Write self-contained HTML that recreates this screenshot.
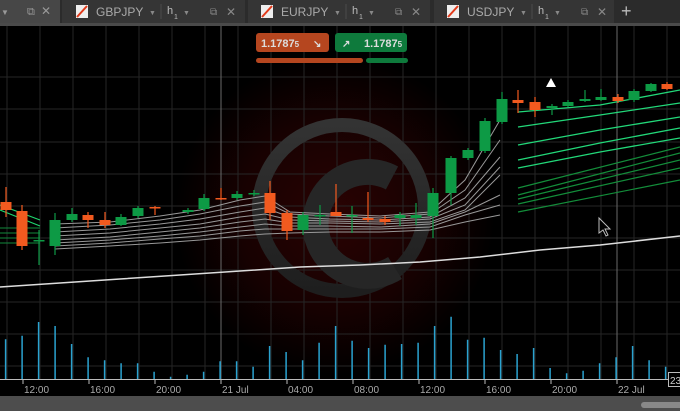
<!DOCTYPE html>
<html><head><meta charset="utf-8"><style>
html,body{margin:0;padding:0;background:#000;width:680px;height:411px;overflow:hidden;font-family:"Liberation Sans",sans-serif}
</style></head><body>
<svg width="680" height="411" viewBox="0 0 680 411" xmlns="http://www.w3.org/2000/svg" font-family="Liberation Sans, sans-serif">
<defs>
<radialGradient id="glow" cx="335" cy="215" r="160" gradientUnits="userSpaceOnUse">
<stop offset="0" stop-color="#2a0303"/><stop offset="0.6" stop-color="#170101"/><stop offset="1" stop-color="#000"/>
</radialGradient>
<linearGradient id="ring" x1="0" y1="0" x2="0" y2="1">
<stop offset="0" stop-color="#333"/><stop offset="1" stop-color="#1e1e1e"/>
</linearGradient>
</defs>
<rect width="680" height="411" fill="#000"/>
<circle cx="335" cy="215" r="160" fill="url(#glow)"/>
<g stroke="#262626" stroke-width="1">
<path d="M0 77H680M0 109H680M0 142H680M0 174H680M0 206H680M0 238H680M0 270H680M0 302H680M0 334H680M0 366H680"/>
<path d="M7 25V380M40 25V380M73 25V380M106 25V380M139 25V380M172 25V380M205 25V380M238 25V380M271 25V380M304 25V380M337 25V380M370 25V380M403 25V380M436 25V380M469 25V380M502 25V380M535 25V380M568 25V380M601 25V380M634 25V380M667 25V380"/>
</g>
<path d="M221 25V380M617 25V380" stroke="#6a6a6a" stroke-width="1"/>
<circle cx="342" cy="208" r="83" fill="none" stroke="url(#ring)" stroke-width="14"/>
<path d="M392 178 A52 52 0 1 0 395 268" fill="none" stroke="#262626" stroke-width="26"/>
<path stroke="#2aa3d0" stroke-width="1.5" d="M5.6 379V339.3M22.1 379V335.7M38.6 379V322M55.1 379V326M71.6 379V344M88.1 379V357.3M104.6 379V360.3M121.1 379V363.3M137.6 379V363.3M154.1 379V371.7M170.6 379V376.7M187.1 379V374.7M203.6 379V371.7M220.1 379V361.3M236.6 379V361.3M253.1 379V366.7M269.6 379V346M286.1 379V352M302.6 379V360.3M319.1 379V342.7M335.6 379V326M352.1 379V340.7M368.6 379V348M385.1 379V344.7M401.6 379V344M418.1 379V342.7M434.6 379V326M451.1 379V316.7M467.6 379V339.7M484.1 379V337.7M500.6 379V350M517.1 379V354M533.6 379V348M550.1 379V368M566.6 379V373.3M583.1 379V370.7M599.6 379V363.3M616.1 379V357.3M632.6 379V346M649.1 379V360.3M665.6 379V366.7"/>
<path d="M0 379.5H668" stroke="#bbb" stroke-width="1"/>
<polyline points="0,287 60,283 120,279 180,275 240,271 300,267 360,265 420,262 480,257 540,250 600,245 680,236" fill="none" stroke="#ddd" stroke-width="1.5"/>
<g fill="none" stroke="#999" stroke-width="1">
<polyline points="55,224 110,222 160,216 200,210 240,200 265,196 290,212 330,214 380,216 430,212 465,180 500,120"/>
<polyline points="55,228 110,225 160,220 200,214 240,206 265,202 290,214 330,216 380,218 430,214 465,190 500,140"/>
<polyline points="55,232 110,229 160,224 200,219 240,212 265,208 290,217 330,219 380,220 430,217 465,198 500,157"/>
<polyline points="55,236 110,233 160,228 200,224 240,217 265,214 290,220 330,221 380,222 430,219 465,205 500,167"/>
<polyline points="55,240 110,237 160,232 200,228 240,222 265,219 290,223 330,223 380,224 430,222 465,210 500,175"/>
<polyline points="55,243 110,240 160,236 200,232 240,227 265,224 290,226 330,226 380,227 430,224 465,212 500,195"/>
<polyline points="55,246 110,243 160,239 200,236 240,231 265,229 290,229 330,229 380,229 430,227 465,215 500,205"/>
<polyline points="55,249 110,246 160,243 200,240 240,236 265,234 290,233 330,232 380,232 430,230 465,222 500,215"/>
</g>
<g stroke="#1fd66e" stroke-width="1.2"><path d="M0 205L40 220M0 210L40 226"/></g>
<g stroke="#128a3c" stroke-width="1"><path d="M0 228H40M0 233H40M0 238H40M0 243H40"/></g>
<g fill="none" stroke="#22d879" stroke-width="1.3">
<polyline points="518,112 600,105 680,90"/>
<polyline points="518,127 600,115 680,103"/>
<polyline points="518,145 600,130 680,117"/>
<polyline points="518,160 600,143 680,128"/>
<polyline points="518,168 600,152 680,138"/>
</g>
<g fill="none" stroke="#138d3a" stroke-width="1.2">
<polyline points="518,188 680,147"/>
<polyline points="518,195 680,153"/>
<polyline points="518,199 680,160"/>
<polyline points="518,204 680,168"/>
<polyline points="518,212 680,180"/>
</g>
<!-- orange candles -->
<path stroke="#f25a1f" stroke-width="1.2" d="M6 187V217M22 205V250M88 212V228M105 212V228M155 206V215M221 188V200M270 181V220M287 210V240M336 184V216M368 192V222M385 216V225M518 90V113M535 97V117M618 94V103M667 82V90"/>
<g fill="#f25a1f">
<rect x="0.5" y="202" width="11" height="8"/><rect x="16.5" y="211" width="11" height="35"/><rect x="82.5" y="215" width="11" height="5"/><rect x="99.5" y="220" width="11" height="5"/><rect x="149.5" y="207" width="11" height="1.5"/><rect x="215.5" y="198" width="11" height="1.5"/><rect x="264.5" y="193" width="11" height="20"/><rect x="281.5" y="213" width="11" height="18"/><rect x="330.5" y="212" width="11" height="4"/><rect x="362.5" y="218" width="11" height="2"/><rect x="379.5" y="219" width="11" height="3"/><rect x="512.5" y="100" width="11" height="3"/><rect x="529.5" y="102" width="11" height="8"/><rect x="612.5" y="97" width="11" height="4"/><rect x="661.5" y="84" width="11" height="5"/>
</g>
<!-- green candles -->
<path stroke="#0d9a45" stroke-width="1.2" d="M39 230V265M55 213V255M72 208V222M121 214V226M138 206V218M188 208V214M204 194V211M237 191V200M254 190V196M303 212V235M320 205V225M352 206V233M400 212V226M416 203V225M433 188V238M451 156V205M468 148V160M485 118V153M502 92V124M552 104V115M568 100V107M585 90V102M601 89V101M634 89V102M651 83V92"/>
<g fill="#0d9a45">
<rect x="33.5" y="240" width="11" height="1.5"/><rect x="49.5" y="220" width="11" height="26"/><rect x="66.5" y="214" width="11" height="6"/><rect x="115.5" y="217" width="11" height="8"/><rect x="132.5" y="208" width="11" height="8"/><rect x="182.5" y="210" width="11" height="2"/><rect x="198.5" y="198" width="11" height="11"/><rect x="231.5" y="194" width="11" height="4"/><rect x="248.5" y="193" width="11" height="1.5"/><rect x="297.5" y="215" width="11" height="15"/><rect x="314.5" y="215" width="11" height="1.5"/><rect x="346.5" y="215" width="11" height="1.5"/><rect x="394.5" y="215" width="11" height="3"/><rect x="410.5" y="215" width="11" height="3"/><rect x="427.5" y="193" width="11" height="23"/><rect x="445.5" y="158" width="11" height="35"/><rect x="462.5" y="150" width="11" height="8"/><rect x="479.5" y="121" width="11" height="30"/><rect x="496.5" y="99" width="11" height="23"/><rect x="546.5" y="106" width="11" height="2"/><rect x="562.5" y="102" width="11" height="4"/><rect x="579.5" y="99" width="11" height="2"/><rect x="595.5" y="97" width="11" height="3"/><rect x="628.5" y="91" width="11" height="9"/><rect x="645.5" y="84" width="11" height="7"/>
</g>
<polygon points="551,78 556,87 546,87" fill="#fff"/>
<path d="M599 218 L599 233 L603 230 L606 236 L608 235 L605 229 L610 229 Z" fill="#000" stroke="#bbb" stroke-width="1"/>
<!-- tab bar -->
<rect x="0" y="0" width="680" height="23" fill="#2b2b2b"/>
<rect x="0" y="0" width="60" height="23" fill="#474747"/>
<rect x="62" y="0" width="183" height="23" fill="#353535"/>
<rect x="248" y="0" width="182" height="23" fill="#353535"/>
<rect x="434" y="0" width="180" height="23" fill="#353535"/>
<rect x="0" y="23" width="680" height="3" fill="#4a4a4a"/>
<g fill="#999" font-size="11">
<text x="1" y="15" font-size="8">▼</text>
<text x="27" y="15">⧉</text><text x="41" y="15" font-size="12">✕</text>
</g>
<g>
<rect x="76" y="5" width="12" height="13" fill="#eee"/><line x1="77" y1="17" x2="87" y2="6" stroke="#e23a1a" stroke-width="2"/>
<text x="96" y="16" fill="#aaa" font-size="12">GBPJPY</text>
<text x="149" y="15" fill="#888" font-size="7">▼</text>
<line x1="161" y1="4" x2="161" y2="19" stroke="#4a4a4a"/>
<text x="167" y="14" fill="#bbb" font-size="11">h</text><text x="174" y="19" fill="#bbb" font-size="7">1</text>
<text x="183" y="15" fill="#888" font-size="7">▼</text>
<text x="210" y="15" fill="#888" font-size="10">⧉</text><text x="226" y="16" fill="#888" font-size="12">✕</text>

<rect x="261" y="5" width="12" height="13" fill="#eee"/><line x1="262" y1="17" x2="272" y2="6" stroke="#e23a1a" stroke-width="2"/>
<text x="281" y="16" fill="#aaa" font-size="12">EURJPY</text>
<text x="334" y="15" fill="#888" font-size="7">▼</text>
<line x1="346" y1="4" x2="346" y2="19" stroke="#4a4a4a"/>
<text x="352" y="14" fill="#bbb" font-size="11">h</text><text x="359" y="19" fill="#bbb" font-size="7">1</text>
<text x="368" y="15" fill="#888" font-size="7">▼</text>
<text x="395" y="15" fill="#888" font-size="10">⧉</text><text x="411" y="16" fill="#888" font-size="12">✕</text>

<rect x="447" y="5" width="12" height="13" fill="#eee"/><line x1="448" y1="17" x2="458" y2="6" stroke="#e23a1a" stroke-width="2"/>
<text x="467" y="16" fill="#aaa" font-size="12">USDJPY</text>
<text x="520" y="15" fill="#888" font-size="7">▼</text>
<line x1="532" y1="4" x2="532" y2="19" stroke="#4a4a4a"/>
<text x="538" y="14" fill="#bbb" font-size="11">h</text><text x="545" y="19" fill="#bbb" font-size="7">1</text>
<text x="554" y="15" fill="#888" font-size="7">▼</text>
<text x="581" y="15" fill="#888" font-size="10">⧉</text><text x="597" y="16" fill="#888" font-size="12">✕</text>
</g>
<text x="621" y="17" fill="#bbb" font-size="18">+</text>
<rect x="256" y="33" width="73" height="19" rx="3" fill="#b5461f"/>
<rect x="335" y="33" width="72" height="19" rx="3" fill="#0e7a3c"/>
<text x="261" y="47" fill="#ddd" font-size="11" font-weight="bold">1.1787<tspan font-size="8">5</tspan></text>
<text x="313" y="47" fill="#ddd" font-size="10" font-weight="bold">↘</text>
<text x="342" y="47" fill="#ddd" font-size="10" font-weight="bold">↗</text>
<text x="364" y="47" fill="#ddd" font-size="11" font-weight="bold">1.1787<tspan font-size="8">5</tspan></text>
<rect x="256" y="58" width="107" height="5" rx="2.5" fill="#b5461f"/>
<rect x="366" y="58" width="42" height="5" rx="2.5" fill="#0e7a3c"/>
<g fill="#aaa" font-size="10">
<text x="24" y="393">12:00</text><text x="90" y="393">16:00</text><text x="156" y="393">20:00</text><text x="222" y="393">21 Jul</text><text x="288" y="393">04:00</text><text x="354" y="393">08:00</text><text x="420" y="393">12:00</text><text x="486" y="393">16:00</text><text x="552" y="393">20:00</text><text x="618" y="393">22 Jul</text>
</g>
<g stroke="#bbb"><path d="M23 379V384M89 379V384M155 379V384M221 379V384M287 379V384M353 379V384M419 379V384M485 379V384M551 379V384M617 379V384"/></g>
<rect x="668.5" y="372.5" width="14" height="14" fill="#000" stroke="#bbb"/>
<text x="670" y="384" fill="#ccc" font-size="10">23</text>
<rect x="0" y="396" width="680" height="15" fill="#4d4d4d"/>
<rect x="641" y="402" width="45" height="6" rx="3" fill="#888"/>
</svg>
</body></html>
